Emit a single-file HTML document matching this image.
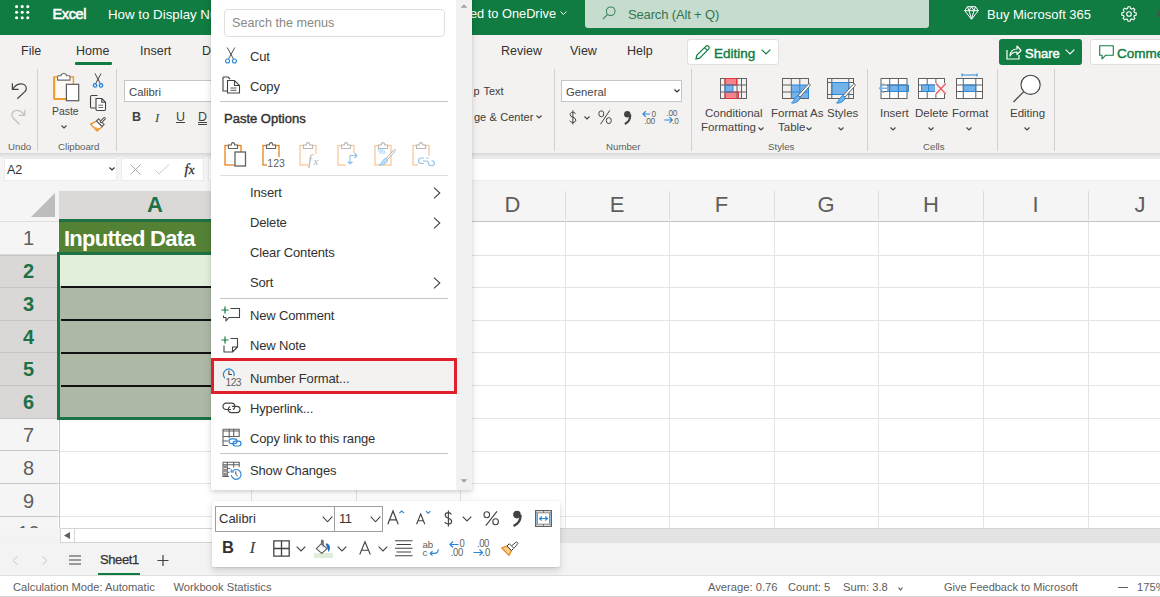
<!DOCTYPE html>
<html><head><meta charset="utf-8">
<style>
*{margin:0;padding:0;box-sizing:border-box}
html,body{width:1160px;height:597px;overflow:hidden;background:#f3f2f1;font-family:"Liberation Sans",sans-serif;position:relative}
.a{position:absolute}
.t{position:absolute;line-height:1;white-space:nowrap}
svg{position:absolute;overflow:visible}
#hdr{left:0;top:0;width:1160px;height:35px;background:#107c41}
#rib{left:0;top:35px;width:1160px;height:118px;background:#f3f2f1}
.sep{position:absolute;width:1px;background:#d2d0ce}
.lbl{position:absolute;line-height:1;white-space:nowrap;font-size:9.7px;color:#605e5c}
.rt{position:absolute;line-height:1;white-space:nowrap;font-size:11.5px;color:#444342}
.mi{position:absolute;line-height:1;white-space:nowrap;font-size:13px;color:#323130;left:250px;letter-spacing:-0.15px}
.msep{position:absolute;left:220px;width:228px;height:1px;background:#c8c6c4}
.colh{position:absolute;top:193.5px;font-size:22px;line-height:1;color:#605e5c;text-align:center;width:40px}
.rown{position:absolute;left:0;width:57px;text-align:center;font-size:20px;line-height:1;color:#605e5c}
.gl{position:absolute;background:#e4e4e4}
</style></head><body>

<!-- HEADER -->
<div id="hdr" class="a"></div>
<svg style="left:14.8px;top:5.3px" width="15" height="15" viewBox="0 0 15 15"><g fill="#fff"><circle cx="1.6" cy="1.6" r="1.55"/><circle cx="7.2" cy="1.6" r="1.55"/><circle cx="12.8" cy="1.6" r="1.55"/><circle cx="1.6" cy="7.2" r="1.55"/><circle cx="7.2" cy="7.2" r="1.55"/><circle cx="12.8" cy="7.2" r="1.55"/><circle cx="1.6" cy="12.8" r="1.55"/><circle cx="7.2" cy="12.8" r="1.55"/><circle cx="12.8" cy="12.8" r="1.55"/></g></svg>
<div class="t" style="left:52.5px;top:6.5px;font-size:14.5px;color:#fff;letter-spacing:-0.35px;-webkit-text-stroke:0.6px #fff">Excel</div>
<div class="t" style="left:108px;top:7.5px;font-size:13.3px;color:#fff">How to Display Number Format</div>
<div class="t" style="left:356px;width:200px;text-align:right;top:7.5px;font-size:12.8px;color:#fff">Saved to OneDrive</div>
<svg style="left:560px;top:11px" width="7" height="4" viewBox="0 0 7 4"><path d="M0.5 0.5 L3.5 3.5 L6.5 0.5" fill="none" stroke="#fff" stroke-width="1"/></svg>
<div class="a" style="left:585px;top:-3px;width:344px;height:31px;background:#c6dccf;border-radius:3px"></div>
<svg style="left:602px;top:6px" width="14" height="14" viewBox="0 0 14 14"><circle cx="8.7" cy="5.3" r="4.3" fill="none" stroke="#40805a" stroke-width="1.1"/><path d="M5.7 8.3 L0.8 13.2" stroke="#40805a" stroke-width="1.2"/></svg>
<div class="t" style="left:628px;top:7.5px;font-size:13px;color:#34764e;letter-spacing:-0.15px">Search (Alt + Q)</div>
<svg style="left:964px;top:6px" width="15" height="14" viewBox="0 0 15 14"><g fill="none" stroke="#fff" stroke-width="1"><path d="M3.5 0.7 H11.5 L14.3 4.7 L7.5 13.3 L0.7 4.7 Z"/><path d="M0.7 4.7 H14.3 M5 4.7 L7.5 13 L10 4.7 M3.5 0.7 L5 4.7 L7.5 0.7 L10 4.7 L11.5 0.7"/></g></svg>
<div class="t" style="left:987px;top:7.5px;font-size:13px;color:#fff">Buy Microsoft 365</div>
<svg style="left:1121px;top:5.5px" width="16" height="16" viewBox="0 0 16 16"><path fill="none" stroke="#fff" stroke-width="1.1" stroke-linejoin="round" d="M13.40 6.51 L15.22 6.90 L15.22 9.10 L13.40 9.49 L12.87 10.76 L13.88 12.33 L12.33 13.88 L10.76 12.87 L9.49 13.40 L9.10 15.22 L6.90 15.22 L6.51 13.40 L5.24 12.87 L3.67 13.88 L2.12 12.33 L3.13 10.76 L2.60 9.49 L0.78 9.10 L0.78 6.90 L2.60 6.51 L3.13 5.24 L2.12 3.67 L3.67 2.12 L5.24 3.13 L6.51 2.60 L6.90 0.78 L9.10 0.78 L9.49 2.60 L10.76 3.13 L12.33 2.12 L13.88 3.67 L12.87 5.24 Z"/><circle cx="8" cy="8" r="2.3" fill="none" stroke="#fff" stroke-width="1.1"/></svg>
<div class="a" style="left:1158px;top:10px;width:3px;height:7px;border-radius:1.5px;background:#3b5a44"></div>

<!-- RIBBON -->
<div id="rib" class="a"></div>
<div class="t" style="left:21px;top:45px;font-size:12.5px;color:#323130">File</div>
<div class="t" style="left:76px;top:45px;font-size:12.5px;color:#323130">Home</div>
<div class="a" style="left:75px;top:62px;width:37px;height:3px;background:#107c41;border-radius:1px"></div>
<div class="t" style="left:140px;top:45px;font-size:12.5px;color:#323130">Insert</div>
<div class="t" style="left:202px;top:45px;font-size:12.5px;color:#323130">Draw</div>
<div class="t" style="left:501px;top:45px;font-size:12.5px;color:#323130">Review</div>
<div class="t" style="left:570px;top:45px;font-size:12.5px;color:#323130">View</div>
<div class="t" style="left:627px;top:45px;font-size:12.5px;color:#323130">Help</div>


<!-- ribbon groups -->
<div class="sep" style="left:37px;top:69px;height:82px"></div>
<div class="sep" style="left:116px;top:69px;height:82px"></div>
<div class="sep" style="left:554px;top:69px;height:82px"></div>
<div class="sep" style="left:691px;top:69px;height:82px"></div>
<div class="sep" style="left:867px;top:69px;height:82px"></div>
<div class="sep" style="left:997px;top:69px;height:82px"></div>
<div class="sep" style="left:1054px;top:69px;height:82px"></div>
<div class="a" style="left:0;top:152.5px;width:1160px;height:6px;background:linear-gradient(#d8d8d8,#e4e4e4 40%,#f3f3f3)"></div>
<div class="lbl" style="left:8px;top:142px">Undo</div>
<div class="lbl" style="left:58px;top:142px">Clipboard</div>
<div class="lbl" style="left:606px;top:142px">Number</div>
<div class="lbl" style="left:768px;top:142px">Styles</div>
<div class="lbl" style="left:923px;top:142px">Cells</div>
<!-- undo/redo -->
<svg style="left:11px;top:82px" width="17" height="18" viewBox="0 0 17 18"><path d="M1.4 1.3 V7.3 H7.6" fill="none" stroke="#424242" stroke-width="1.2"/><path d="M1.8 7 C4 3.5 7 1.8 10.3 1.8 C13.3 1.8 15.3 4 15.3 6.4 C15.3 7.9 14.6 8.9 13.6 9.9 L6.3 16.8" fill="none" stroke="#424242" stroke-width="1.2"/></svg>
<svg style="left:11px;top:109px" width="17" height="17" viewBox="0 0 17 17"><path d="M13.8 0.8 V6.3 H7.6" fill="none" stroke="#c2c0be" stroke-width="1.2"/><path d="M13.4 6 C11.2 2.6 8.3 1.3 5.7 1.3 C2.7 1.3 0.9 3.6 0.9 6 C0.9 7.5 1.6 8.5 2.6 9.5 L8.5 15.3" fill="none" stroke="#c2c0be" stroke-width="1.2"/></svg>
<!-- paste -->
<svg style="left:53px;top:72px" width="27" height="30" viewBox="0 0 27 30">
<rect x="1.2" y="4.9" width="19.2" height="22" fill="#fdfaf5" stroke="#f29b2d" stroke-width="1.5"/>
<path d="M1.2 26.9 H13 M1.2 4.9 V26.9" stroke="#f29b2d" stroke-width="2" fill="none"/>
<path d="M4.6 8.1 V4.6 Q4.6 3.8 5.4 3.8 H8 C8.3 0.8 13.3 0.8 13.6 3.8 H16.2 Q17 3.8 17 4.6 V8.1 Z" fill="#fff" stroke="#6b6b6b" stroke-width="1.1"/>
<rect x="13.4" y="12.3" width="12.3" height="16.4" fill="#fff" stroke="#5a5a5a" stroke-width="1.2"/>
</svg>
<div class="rt" style="left:52px;top:106.5px;font-size:10.4px;color:#484644">Paste</div>
<svg style="left:61px;top:125px" width="6" height="4" viewBox="0 0 6 4"><path d="M0.5 0.5 L3 3 L5.5 0.5" fill="none" stroke="#424242" stroke-width="1.1"/></svg>
<!-- scissors -->
<svg style="left:92px;top:73px" width="12" height="15" viewBox="0 0 12 15"><path d="M3 0.5 L8.2 10.3 M9 0.5 L3.8 10.3" stroke="#424242" stroke-width="1"/><circle cx="3" cy="12.4" r="1.7" fill="none" stroke="#2b88d8" stroke-width="1.4"/><circle cx="9" cy="12.4" r="1.7" fill="none" stroke="#2b88d8" stroke-width="1.4"/></svg>
<!-- copy -->
<svg style="left:89px;top:94px" width="18" height="18" viewBox="0 0 18 18"><path d="M8.5 1.5 H2.8 Q1.5 1.5 1.5 2.8 V12.7 Q1.5 14 2.8 14 H6.5" fill="none" stroke="#424242" stroke-width="1.1"/><path d="M7 4.5 H12.8 L16.5 8.2 V15.3 Q16.5 16.5 15.3 16.5 H8.2 Q7 16.5 7 15.3 Z M12.8 4.5 V8.2 H16.5" fill="#fff" stroke="#424242" stroke-width="1.1"/><path d="M9.3 11.2 H14.2 M9.3 13.5 H14.2" stroke="#616161" stroke-width="0.9"/></svg>
<!-- format painter -->
<svg style="left:88px;top:116px" width="18" height="17" viewBox="0 0 18 17"><path d="M2.7 8.1 L8.7 5 L14.1 10.7 L9.1 15.1 Z" fill="#fff" stroke="#e8821d" stroke-width="1.2" stroke-linejoin="round"/><path d="M4.2 10.2 L12.3 12.4 L9.1 15.1 Z" fill="#f5a742"/><path d="M8.5 5 L10.6 2.9 L16.1 8.4 L14 10.5 Z" fill="#fff" stroke="#5a5a5a" stroke-width="1.1"/><path d="M13.2 5.7 L16.4 2.5" stroke="#5a5a5a" stroke-width="3" stroke-linecap="round"/><path d="M13.2 5.7 L16.4 2.5" stroke="#fff" stroke-width="1" stroke-linecap="round"/></svg>
<!-- font group (partially covered) -->
<div class="a" style="left:124px;top:80px;width:100px;height:22px;background:#fff;border:1px solid #c8c6c4"></div>
<div class="rt" style="left:129px;top:86.5px;font-size:11.3px;color:#484644">Calibri</div>
<div class="t" style="left:132px;top:111px;font-size:12.5px;font-weight:bold;color:#424242">B</div>
<div class="t" style="left:155px;top:111px;font-size:13px;font-style:italic;font-family:'Liberation Serif',serif;color:#424242">I</div>
<div class="t" style="left:176px;top:111px;font-size:12.5px;color:#424242;text-decoration:underline">U</div>
<div class="t" style="left:198px;top:111px;font-size:12.5px;color:#424242;text-decoration:underline double">D</div>
<!-- alignment partial -->
<div class="rt" style="left:473.5px;top:86px;font-size:11px;word-spacing:1px;color:#3b3a39">p Text</div>
<div class="rt" style="left:474px;top:112px;font-size:11px;word-spacing:0.3px;color:#3b3a39">ge &amp; Center</div>
<svg style="left:536px;top:115px" width="6" height="4" viewBox="0 0 6 4"><path d="M0.5 0.5 L3 3 L5.5 0.5" fill="none" stroke="#424242" stroke-width="1.1"/></svg>
<!-- number group -->
<div class="a" style="left:561px;top:80px;width:121px;height:22px;background:#fff;border:1px solid #c8c6c4"></div>
<div class="rt" style="left:566px;top:86.5px;font-size:11.3px;color:#484644">General</div>
<svg style="left:674px;top:89px" width="6" height="4" viewBox="0 0 6 4"><path d="M0.5 0.5 L3 3 L5.5 0.5" fill="none" stroke="#323130" stroke-width="1.2"/></svg>
<svg style="left:568.5px;top:110px" width="8" height="15" viewBox="0 0 8 15"><path d="M6.6 4 C6.1 2.9 5.1 2.3 3.8 2.3 C2.2 2.3 1.1 3.2 1.1 4.6 C1.1 7.8 6.8 6.8 6.8 10.1 C6.8 11.5 5.6 12.4 3.9 12.4 C2.4 12.4 1.3 11.8 0.7 10.7 M3.9 0.3 V14.5" fill="none" stroke="#424242" stroke-width="1"/></svg>
<svg style="left:584px;top:116px" width="6" height="4" viewBox="0 0 6 4"><path d="M0.5 0.5 L3 3 L5.5 0.5" fill="none" stroke="#424242" stroke-width="1.1"/></svg>
<svg style="left:597.5px;top:110px" width="15" height="15" viewBox="0 0 15 15"><ellipse cx="3.3" cy="3.8" rx="2.5" ry="3" fill="none" stroke="#424242" stroke-width="1"/><ellipse cx="10.8" cy="10.6" rx="2.5" ry="3" fill="none" stroke="#424242" stroke-width="1"/><path d="M11.8 0.3 L2.5 14.2" stroke="#424242" stroke-width="1"/></svg>
<svg style="left:623px;top:110px" width="9" height="15" viewBox="0 0 9 15"><circle cx="4.3" cy="4.2" r="3.2" fill="#424242"/><path d="M7.3 4.5 C7.5 9 5 12.5 1.8 14" fill="none" stroke="#424242" stroke-width="2"/></svg>
<svg style="left:642px;top:109px" width="16" height="16" viewBox="0 0 16 16"><path d="M1 5 H8 M3.8 2.2 L1 5 L3.8 7.8" fill="none" stroke="#2b88d8" stroke-width="1.2"/><text x="9.5" y="7" font-size="8.3" fill="#616161" font-family="Liberation Sans" transform="scale(1,1.1)">0</text><text x="2.3" y="13.6" font-size="8.3" fill="#616161" font-family="Liberation Sans" letter-spacing="-0.3" transform="scale(1,1.1)">.00</text></svg>
<svg style="left:664px;top:109px" width="16" height="16" viewBox="0 0 16 16"><text x="2.5" y="6.4" font-size="8.3" fill="#616161" font-family="Liberation Sans" letter-spacing="-0.3" transform="scale(1,1.1)">.00</text><path d="M0.3 11 H8.3 M5.5 8.2 L8.3 11 L5.5 13.8" fill="none" stroke="#2b88d8" stroke-width="1.2"/><text x="8" y="13.6" font-size="8.3" fill="#616161" font-family="Liberation Sans" transform="scale(1,1.1)">.0</text></svg>
<!-- editing button -->
<div class="a" style="left:687px;top:39px;width:92px;height:26px;background:#fff;border:1px solid #e1dfdd;border-radius:3px"></div>
<svg style="left:695px;top:45px" width="15" height="15" viewBox="0 0 15 15"><path d="M1 14 L1.8 10.3 L10.8 1.3 C11.6 0.5 12.8 0.5 13.6 1.3 C14.4 2.1 14.4 3.3 13.6 4.1 L4.6 13.1 Z M9.5 2.6 L12.3 5.4" fill="none" stroke="#107c41" stroke-width="1.2"/></svg>
<div class="t" style="left:714px;top:46.8px;font-size:13.5px;color:#107c41;-webkit-text-stroke:0.4px #107c41">Editing</div>
<svg style="left:761px;top:49px" width="10" height="6" viewBox="0 0 10 6"><path d="M0.7 0.7 L5 5 L9.3 0.7" fill="none" stroke="#107c41" stroke-width="1.2"/></svg>
<!-- share / comments -->
<div class="a" style="left:999px;top:39px;width:83px;height:26px;background:#107c41;border-radius:3px"></div>
<svg style="left:1006px;top:44px" width="16" height="16" viewBox="0 0 16 16"><path d="M1 6 V15 H13 V11" fill="none" stroke="#fff" stroke-width="1.2"/><path d="M4 12 C4 7 7.5 5 11 5 V2 L15 6.5 L11 10.5 V8 C8 8 5.5 9 4 12 Z" fill="none" stroke="#fff" stroke-width="1.2" stroke-linejoin="round"/></svg>
<div class="t" style="left:1025px;top:46.8px;font-size:13px;color:#fff;-webkit-text-stroke:0.45px #fff">Share</div>
<svg style="left:1065px;top:49px" width="10" height="6" viewBox="0 0 10 6"><path d="M0.7 0.7 L5 5 L9.3 0.7" fill="none" stroke="#fff" stroke-width="1.2"/></svg>
<div class="a" style="left:1090px;top:39px;width:90px;height:26px;background:#fff;border:1px solid #e1dfdd;border-radius:3px"></div>
<svg style="left:1099px;top:45px" width="15" height="15" viewBox="0 0 15 15"><path d="M0.7 0.7 H14.3 V10.3 H6.5 L3 13.8 V10.3 H0.7 Z" fill="none" stroke="#107c41" stroke-width="1.1" stroke-linejoin="round"/></svg>
<div class="t" style="left:1117px;top:46.8px;font-size:13.5px;color:#107c41;-webkit-text-stroke:0.4px #107c41">Comments</div>


<!-- styles group -->
<svg style="left:720px;top:78px" width="27" height="21" viewBox="0 0 27 21">
<rect x="5" y="0.5" width="11.5" height="6.5" fill="#f4848c"/><rect x="5" y="7" width="8" height="7" fill="#73b3ea"/><rect x="5" y="14" width="13.5" height="6.5" fill="#f4848c"/>
<g fill="none" stroke="#616161" stroke-width="1"><rect x="0.5" y="0.5" width="26" height="20"/><path d="M0.5 7 H26.5 M0.5 14 H26.5 M5 0.5 V20.5 M21.5 0.5 V20.5 M17 0.5 V20.5"/></g>
<g fill="none" stroke="#e0343f" stroke-width="1"><path d="M5 0.5 H16.5 V7 H5 Z M5 14 H18.5 V20.5 H5 Z"/></g>
<path d="M5 7 H13 V14 H5 Z" fill="none" stroke="#2b88d8" stroke-width="1"/>
</svg>
<svg style="left:782px;top:78px" width="29" height="26" viewBox="0 0 29 26">
<rect x="9.3" y="7" width="17.2" height="13.5" fill="#73b3ea"/>
<g fill="none" stroke="#616161" stroke-width="1"><rect x="0.5" y="0.5" width="26" height="20"/><path d="M0.5 7 H9.3 M0.5 14 H9.3 M9.3 0.5 V7 M17.8 0.5 V7 M9.3 7 V20.5"/></g>
<path d="M9.3 7 H26.5 V20.5 M9.3 14 H26.5 M17.8 7 V20.5" fill="none" stroke="#2b88d8" stroke-width="1"/>
<path d="M27.8 6 C28.6 6.8 28 7.8 27 9 L18 19 L16.3 17.3 L25.5 7 C26.5 6 27.2 5.4 27.8 6 Z" fill="#fff" stroke="#616161" stroke-width="1"/>
<path d="M16 17.5 L18 19.5 C17.5 23.5 13 25.5 9.5 25 C12 23.5 12 19.5 16 17.5 Z" fill="#73b3ea" stroke="#2b88d8" stroke-width="1"/>
</svg>
<svg style="left:827px;top:78px" width="29" height="26" viewBox="0 0 29 26">
<rect x="4.8" y="4.5" width="17" height="12" fill="#73b3ea"/>
<g fill="none" stroke="#616161" stroke-width="1"><rect x="0.5" y="0.5" width="26" height="20"/><path d="M0.5 4.5 H26.5 M0.5 16.5 H26.5 M4.8 0.5 V20.5 M21.8 0.5 V20.5"/></g>
<path d="M4.8 4.5 H21.8 V16.5 H4.8 Z" fill="none" stroke="#2b88d8" stroke-width="1"/>
<path d="M27.8 6 C28.6 6.8 28 7.8 27 9 L18 19 L16.3 17.3 L25.5 7 C26.5 6 27.2 5.4 27.8 6 Z" fill="#fff" stroke="#616161" stroke-width="1"/>
<path d="M16 17.5 L18 19.5 C17.5 23.5 13 25.5 9.5 25 C12 23.5 12 19.5 16 17.5 Z" fill="#73b3ea" stroke="#2b88d8" stroke-width="1"/>
</svg>
<div class="rt" style="left:705px;top:108px">Conditional</div>
<div class="rt" style="left:701px;top:122px">Formatting</div>
<div class="rt" style="left:771px;top:108px">Format As</div>
<div class="rt" style="left:778px;top:122px">Table</div>
<div class="rt" style="left:827px;top:108px">Styles</div>
<!-- cells group -->
<svg style="left:879px;top:78px" width="30" height="21" viewBox="0 0 30 21">
<rect x="2" y="0.5" width="26" height="20" fill="#fff"/>
<rect x="8" y="7" width="21.5" height="6.5" fill="#73b3ea"/>
<g fill="none" stroke="#616161" stroke-width="1"><rect x="2" y="0.5" width="26" height="20"/><path d="M2 7 H28 M2 13.5 H28 M10.7 0.5 V20.5 M19.4 0.5 V20.5"/></g>
<path d="M8 7 H29.5 V13.5 H8 M19.4 7 V13.5" fill="none" stroke="#2b88d8" stroke-width="1"/>
<path d="M10 10.2 H1 M5 5.5 L0.7 10.2 L5 15" fill="none" stroke="#73b3ea" stroke-width="1.6"/>
</svg>
<svg style="left:918px;top:78px" width="29" height="21" viewBox="0 0 29 21">
<rect x="0.5" y="0.5" width="26" height="20" fill="#fff"/>
<g fill="none" stroke="#616161" stroke-width="1"><rect x="0.5" y="0.5" width="26" height="20"/><path d="M0.5 7 H26.5 M0.5 13.5 H26.5 M9.2 0.5 V20.5 M17.9 0.5 V20.5"/></g>
<path d="M3.5 7 H17.5 L19.5 10.2 L17.5 13.5 H3.5 Z" fill="#73b3ea" stroke="#2b88d8" stroke-width="1"/><path d="M10.5 7 V13.5" stroke="#2b88d8"/>
<rect x="17" y="5" width="11" height="11" fill="#f3f2f1"/>
<path d="M18 5.5 L27.8 16 M27.8 5.5 L18 16" stroke="#e8525b" stroke-width="1.1"/>
</svg>
<svg style="left:956px;top:73px" width="27" height="26" viewBox="0 0 27 26">
<path d="M6 2 H21 M6 0.5 V3.5 M21 0.5 V3.5" fill="none" stroke="#2b88d8" stroke-width="1.1"/>
<rect x="0.5" y="5.5" width="26" height="20" fill="#fff"/>
<rect x="7.3" y="12" width="12.5" height="6.5" fill="#73b3ea"/>
<g fill="none" stroke="#616161" stroke-width="1"><rect x="0.5" y="5.5" width="26" height="20"/><path d="M0.5 12 H26.5 M0.5 18.5 H26.5 M7.3 5.5 V25.5 M19.8 5.5 V25.5"/></g>
<rect x="7.3" y="12" width="12.5" height="6.5" fill="none" stroke="#2b88d8" stroke-width="1"/>
</svg>
<div class="rt" style="left:880px;top:108px">Insert</div>
<div class="rt" style="left:915px;top:108px">Delete</div>
<div class="rt" style="left:952px;top:108px">Format</div>
<!-- editing group -->
<svg style="left:1012px;top:74px" width="30" height="30" viewBox="0 0 30 30"><circle cx="18.6" cy="10.8" r="9.6" fill="#fff" stroke="#424242" stroke-width="1.1"/><path d="M11.8 17.6 L1.5 28" stroke="#424242" stroke-width="1.2"/></svg>
<div class="rt" style="left:1010px;top:108px">Editing</div>
<svg style="left:758px;top:127px" width="6" height="4" viewBox="0 0 6 4"><path d="M0.5 0.5 L3 3 L5.5 0.5" fill="none" stroke="#424242" stroke-width="1.1"/></svg>
<svg style="left:806px;top:127px" width="6" height="4" viewBox="0 0 6 4"><path d="M0.5 0.5 L3 3 L5.5 0.5" fill="none" stroke="#424242" stroke-width="1.1"/></svg>
<svg style="left:838px;top:127px" width="6" height="4" viewBox="0 0 6 4"><path d="M0.5 0.5 L3 3 L5.5 0.5" fill="none" stroke="#424242" stroke-width="1.1"/></svg>
<svg style="left:890px;top:127px" width="6" height="4" viewBox="0 0 6 4"><path d="M0.5 0.5 L3 3 L5.5 0.5" fill="none" stroke="#424242" stroke-width="1.1"/></svg>
<svg style="left:928px;top:127px" width="6" height="4" viewBox="0 0 6 4"><path d="M0.5 0.5 L3 3 L5.5 0.5" fill="none" stroke="#424242" stroke-width="1.1"/></svg>
<svg style="left:966px;top:127px" width="6" height="4" viewBox="0 0 6 4"><path d="M0.5 0.5 L3 3 L5.5 0.5" fill="none" stroke="#424242" stroke-width="1.1"/></svg>
<svg style="left:1024px;top:127px" width="6" height="4" viewBox="0 0 6 4"><path d="M0.5 0.5 L3 3 L5.5 0.5" fill="none" stroke="#424242" stroke-width="1.1"/></svg>


<!-- formula bar -->
<div class="a" style="left:0;top:158px;width:1160px;height:33px;background:#f5f5f5"></div>
<div class="a" style="left:4px;top:158px;width:113px;height:22.5px;background:#fff;border:1px solid #edebe9"></div>
<div class="t" style="left:7px;top:164px;font-size:12.5px;color:#323130">A2</div>
<svg style="left:109px;top:167px" width="6" height="4" viewBox="0 0 6 4"><path d="M0.5 0.5 L3 3 L5.5 0.5" fill="none" stroke="#323130" stroke-width="1.2"/></svg>
<div class="a" style="left:121px;top:158px;width:82.5px;height:22.5px;background:#fff;border:1px solid #edebe9"></div>
<svg style="left:130px;top:164px" width="11" height="11" viewBox="0 0 11 11"><path d="M0.5 0.5 L10.5 10.5 M10.5 0.5 L0.5 10.5" stroke="#a19f9d" stroke-width="0.9"/></svg>
<svg style="left:154px;top:164px" width="16" height="11" viewBox="0 0 16 11"><path d="M0.5 5.5 L5 10 L15 0.5" fill="none" stroke="#c8c6c4" stroke-width="0.9"/></svg>
<div class="t" style="left:184.5px;top:161.5px;font-size:14.5px;font-style:italic;font-family:'Liberation Serif',serif;color:#323130;-webkit-text-stroke:0.3px #323130;letter-spacing:0.3px">f<span style="font-size:13px">x</span></div>
<div class="a" style="left:208px;top:158px;width:960px;height:22.5px;background:#fff;border:1px solid #edebe9"></div>
<!-- column headers -->
<div class="a" style="left:0;top:191px;width:1160px;height:31px;background:#f5f5f5"></div>
<div class="a" style="left:59px;top:191px;width:192px;height:29px;background:#dad9d8"></div>
<div class="a" style="left:0;top:221px;width:59px;height:1px;background:#e1dfdd"></div><div class="a" style="left:59px;top:221px;width:1101px;height:1.5px;background:#c4c4c4"></div>
<div class="a" style="left:59px;top:219px;width:192px;height:3px;background:#1e7145"></div>
<svg style="left:31px;top:193px" width="25" height="25" viewBox="0 0 25 25"><path d="M24 0 V24 H0 Z" fill="#bdbdbd"/></svg>
<div class="gl" style="left:251px;top:191px;width:1px;height:29px;background:#dcdcdc"></div>
<div class="gl" style="left:356px;top:191px;width:1px;height:29px;background:#dcdcdc"></div>
<div class="gl" style="left:460px;top:191px;width:1px;height:29px;background:#dcdcdc"></div>
<div class="gl" style="left:565px;top:191px;width:1px;height:29px;background:#dcdcdc"></div>
<div class="gl" style="left:669px;top:191px;width:1px;height:29px;background:#dcdcdc"></div>
<div class="gl" style="left:774px;top:191px;width:1px;height:29px;background:#dcdcdc"></div>
<div class="gl" style="left:878px;top:191px;width:1px;height:29px;background:#dcdcdc"></div>
<div class="gl" style="left:983px;top:191px;width:1px;height:29px;background:#dcdcdc"></div>
<div class="gl" style="left:1088px;top:191px;width:1px;height:29px;background:#dcdcdc"></div>
<div class="colh" style="left:135px;color:#1e7145;font-weight:bold">A</div>
<div class="colh" style="left:283px">B</div>
<div class="colh" style="left:388px">C</div>
<div class="colh" style="left:492.5px">D</div>
<div class="colh" style="left:597px">E</div>
<div class="colh" style="left:701.5px">F</div>
<div class="colh" style="left:806px">G</div>
<div class="colh" style="left:911px">H</div>
<div class="colh" style="left:1015.5px">I</div>
<div class="colh" style="left:1120px">J</div>
<div class="a" style="left:0;top:222px;width:59px;height:306px;background:#f5f5f5"></div>
<div class="a" style="left:58px;top:222px;width:1102px;height:306px;background:#fff"></div>
<div class="a" style="left:0;top:254px;width:58px;height:164px;background:#d9d8d7"></div>
<div class="gl" style="left:0;top:254.5px;width:58px;height:1px;background:#c8c6c4"></div>
<div class="gl" style="left:58px;top:255px;width:1102px;height:1px"></div>
<div class="gl" style="left:0;top:287px;width:58px;height:1px;background:#c8c6c4"></div>
<div class="gl" style="left:58px;top:287px;width:1102px;height:1px"></div>
<div class="gl" style="left:0;top:320px;width:58px;height:1px;background:#c8c6c4"></div>
<div class="gl" style="left:58px;top:320px;width:1102px;height:1px"></div>
<div class="gl" style="left:0;top:352px;width:58px;height:1px;background:#c8c6c4"></div>
<div class="gl" style="left:58px;top:352px;width:1102px;height:1px"></div>
<div class="gl" style="left:0;top:385px;width:58px;height:1px;background:#c8c6c4"></div>
<div class="gl" style="left:58px;top:385px;width:1102px;height:1px"></div>
<div class="gl" style="left:0;top:418px;width:58px;height:1px;background:#c8c6c4"></div>
<div class="gl" style="left:58px;top:418px;width:1102px;height:1px"></div>
<div class="gl" style="left:0;top:450px;width:58px;height:1px;background:#c8c6c4"></div>
<div class="gl" style="left:58px;top:450.5px;width:1102px;height:1px"></div>
<div class="gl" style="left:0;top:483px;width:58px;height:1px;background:#c8c6c4"></div>
<div class="gl" style="left:58px;top:483px;width:1102px;height:1px"></div>
<div class="gl" style="left:0;top:516px;width:58px;height:1px;background:#c8c6c4"></div>
<div class="gl" style="left:58px;top:516px;width:1102px;height:1px"></div>
<div class="gl" style="left:251px;top:222px;width:1px;height:306px"></div>
<div class="gl" style="left:356px;top:222px;width:1px;height:306px"></div>
<div class="gl" style="left:460px;top:222px;width:1px;height:306px"></div>
<div class="gl" style="left:565px;top:222px;width:1px;height:306px"></div>
<div class="gl" style="left:669px;top:222px;width:1px;height:306px"></div>
<div class="gl" style="left:774px;top:222px;width:1px;height:306px"></div>
<div class="gl" style="left:878px;top:222px;width:1px;height:306px"></div>
<div class="gl" style="left:983px;top:222px;width:1px;height:306px"></div>
<div class="gl" style="left:1088px;top:222px;width:1px;height:306px"></div>
<div class="a" style="left:59px;top:222px;width:1px;height:306px;background:#c8c6c4"></div>
<div class="rown" style="top:227.8px">1</div>
<div class="rown" style="top:261.2px;color:#1e7145;font-weight:bold">2</div>
<div class="rown" style="top:293.9px;color:#1e7145;font-weight:bold">3</div>
<div class="rown" style="top:326.6px;color:#1e7145;font-weight:bold">4</div>
<div class="rown" style="top:359.4px;color:#1e7145;font-weight:bold">5</div>
<div class="rown" style="top:392.1px;color:#1e7145;font-weight:bold">6</div>
<div class="rown" style="top:425.0px">7</div>
<div class="rown" style="top:457.9px">8</div>
<div class="rown" style="top:490.6px">9</div>
<div class="rown" style="top:523.4px">10</div>
<div class="a" style="left:59px;top:222px;width:192px;height:32px;background:#548235"></div>
<div class="t" style="left:64px;top:228px;font-size:22px;font-weight:bold;color:#fff;letter-spacing:-0.75px">Inputted Data</div>
<div class="a" style="left:60px;top:255px;width:191px;height:31px;background:#e2efda"></div>
<div class="a" style="left:60px;top:286px;width:191px;height:131px;background:#adb9a6"></div>
<div class="a" style="left:61px;top:286px;width:190px;height:2px;background:#111"></div>
<div class="a" style="left:61px;top:319px;width:190px;height:2px;background:#111"></div>
<div class="a" style="left:61px;top:352px;width:190px;height:2px;background:#111"></div>
<div class="a" style="left:61px;top:385px;width:190px;height:2px;background:#111"></div>
<div class="a" style="left:57px;top:252px;width:196px;height:168px;border:3px solid #1e7145"></div>
<div class="a" style="left:0;top:528px;width:1160px;height:14px;background:#f3f3f3"></div>
<div class="a" style="left:60px;top:528px;width:1100px;height:15px;background:#fff;border:1px solid #d4d4d4"></div>
<div class="a" style="left:300px;top:529px;width:860px;height:14px;background:#e3e3e3"></div>
<div class="a" style="left:74px;top:528px;width:1px;height:15px;background:#d4d4d4"></div>
<svg style="left:64px;top:532px" width="7" height="7" viewBox="0 0 7 7"><path d="M6 0 V7 L0 3.5 Z" fill="#605e5c"/></svg>
<div class="a" style="left:0;top:543px;width:1160px;height:33px;background:#f3f3f3"></div>
<svg style="left:12px;top:556px" width="6" height="9" viewBox="0 0 6 9"><path d="M5.5 0.5 L1 4.5 L5.5 8.5" fill="none" stroke="#c8c6c4" stroke-width="1"/></svg>
<svg style="left:42px;top:556px" width="6" height="9" viewBox="0 0 6 9"><path d="M0.5 0.5 L5 4.5 L0.5 8.5" fill="none" stroke="#c8c6c4" stroke-width="1"/></svg>
<svg style="left:69px;top:555px" width="12" height="10" viewBox="0 0 12 10"><path d="M0 1 H12 M0 5 H12 M0 9 H12" stroke="#424242" stroke-width="1.2"/></svg>
<div class="t" style="left:100px;top:553px;font-size:13px;color:#323130;letter-spacing:-0.4px;-webkit-text-stroke:0.25px #323130">Sheet1</div>
<div class="a" style="left:98px;top:572.5px;width:42px;height:2.7px;background:#107c41"></div>
<svg style="left:157px;top:555px" width="12" height="11" viewBox="0 0 12 11"><path d="M6 0 V11 M0.5 5.5 H11.5" stroke="#424242" stroke-width="1.2"/></svg>
<div class="a" style="left:0;top:575px;width:1160px;height:22px;background:#fff;border-top:1px solid #e1dfdd;border-bottom:1.5px solid #d6d6d6"></div>
<div class="t" style="left:13px;top:582px;font-size:11.2px;color:#605e5c">Calculation Mode: Automatic</div>
<div class="t" style="left:173.5px;top:582px;font-size:11.2px;color:#605e5c">Workbook Statistics</div>
<div class="t" style="left:708px;top:582px;font-size:11.2px;color:#605e5c">Average: 0.76</div>
<div class="t" style="left:788px;top:582px;font-size:11.2px;color:#605e5c">Count: 5</div>
<div class="t" style="left:843px;top:582px;font-size:11.2px;color:#605e5c">Sum: 3.8</div>
<div class="t" style="left:944px;top:582px;font-size:11px;color:#605e5c">Give Feedback to Microsoft</div>
<div class="t" style="left:1137px;top:582px;font-size:11.2px;color:#605e5c">175%</div>
<svg style="left:898px;top:587px" width="5" height="4" viewBox="0 0 5 4"><path d="M0.5 0.5 L2.5 3 L4.5 0.5" fill="none" stroke="#605e5c" stroke-width="1.2"/></svg>
<div class="a" style="left:1118px;top:586.5px;width:10px;height:1.6px;background:#605e5c"></div>


<!-- CONTEXT MENU -->
<div class="a" style="left:211px;top:-10px;width:261px;height:500px;background:#fff;box-shadow:0 1.6px 3.6px rgba(0,0,0,.13),0 0.3px 0.9px rgba(0,0,0,.11),0 4px 10px rgba(0,0,0,.08)"></div>
<div class="a" style="left:456px;top:0;width:16px;height:490px;background:#f1f1f1"></div>
<svg style="left:460px;top:4px" width="8" height="4" viewBox="0 0 8 4"><path d="M0.5 3.8 L4 0.3 L7.5 3.8 Z" fill="#a3a3a3"/></svg>
<svg style="left:460px;top:479px" width="8" height="4" viewBox="0 0 8 4"><path d="M0.5 0.2 L4 3.7 L7.5 0.2 Z" fill="#a3a3a3"/></svg>
<div class="a" style="left:224px;top:9px;width:221px;height:28px;border:1px solid #e1dfdd;border-radius:4px;background:#fff"></div>
<div class="t" style="left:232px;top:16.5px;font-size:12.6px;color:#8a8886">Search the menus</div>
<div class="msep" style="top:101px"></div>
<div class="msep" style="top:175px;background:#e1dfdd"></div>
<div class="msep" style="top:298px"></div>
<div class="msep" style="top:453px"></div>
<div class="a" style="left:211px;top:358px;width:246px;height:36px;border:3px solid #e0202b;background:#f3f2f1"></div>
<div class="mi" style="top:49.8px">Cut</div>
<div class="mi" style="top:79.6px">Copy</div>
<div class="t" style="left:224px;top:111.8px;font-size:13px;color:#323130;-webkit-text-stroke:0.4px #323130">Paste Options</div>
<div class="mi" style="top:186.4px">Insert</div>
<div class="mi" style="top:216.1px">Delete</div>
<div class="mi" style="top:246.3px">Clear Contents</div>
<div class="mi" style="top:276px">Sort</div>
<div class="mi" style="top:309.2px">New Comment</div>
<div class="mi" style="top:338.9px">New Note</div>
<div class="mi" style="top:371.7px">Number Format...</div>
<div class="mi" style="top:402px">Hyperlink...</div>
<div class="mi" style="top:432.2px">Copy link to this range</div>
<div class="mi" style="top:463.9px">Show Changes</div>
<svg style="left:433px;top:187px" width="8" height="12" viewBox="0 0 8 12"><path d="M1 0.7 L6.8 6 L1 11.3" fill="none" stroke="#424242" stroke-width="1.1"/></svg>
<svg style="left:433px;top:216.5px" width="8" height="12" viewBox="0 0 8 12"><path d="M1 0.7 L6.8 6 L1 11.3" fill="none" stroke="#424242" stroke-width="1.1"/></svg>
<svg style="left:433px;top:276.5px" width="8" height="12" viewBox="0 0 8 12"><path d="M1 0.7 L6.8 6 L1 11.3" fill="none" stroke="#424242" stroke-width="1.1"/></svg>

<!-- menu icons -->
<svg style="left:225px;top:47px" width="12" height="17" viewBox="0 0 12 17"><path d="M2.2 0.5 L8.5 12 M9.8 0.5 L3.5 12" stroke="#424242" stroke-width="0.9"/><circle cx="2.6" cy="14" r="2" fill="none" stroke="#2b88d8" stroke-width="1.1"/><circle cx="9.4" cy="14" r="2" fill="none" stroke="#2b88d8" stroke-width="1.1"/></svg>
<svg style="left:222px;top:76px" width="19" height="18" viewBox="0 0 19 18"><path d="M1 1 H6 L8 3 M1 1 V15 H5" fill="none" stroke="#424242" stroke-width="1.1"/><path d="M5.5 4.5 H12.5 L17.5 9.5 V17 H5.5 Z M12.5 4.5 V9.5 H17.5" fill="#fff" stroke="#424242" stroke-width="1.1"/><path d="M8.5 12 H14.5 M8.5 14.3 H14.5" stroke="#424242" stroke-width="0.9"/></svg>
<svg style="left:224px;top:141px" width="24" height="27" viewBox="0 0 24 27"><rect x="1" y="4.5" width="16" height="19.5" fill="#fff" stroke="#e8821d" stroke-width="1.3"/><path d="M4.5 7.5 V4 H7.3 C7.3 0.8 10.7 0.8 10.7 4 H13.5 V7.5 Z" fill="#fff" stroke="#616161" stroke-width="1.1"/><rect x="11" y="11" width="10.5" height="14" fill="#fff" stroke="#616161" stroke-width="1.3"/></svg>
<svg style="left:262px;top:141px" width="24" height="27" viewBox="0 0 24 27"><rect x="1" y="4.5" width="16" height="19.5" fill="#fff" stroke="#e8821d" stroke-width="1.3"/><path d="M4.5 7.5 V4 H7.3 C7.3 0.8 10.7 0.8 10.7 4 H13.5 V7.5 Z" fill="#fff" stroke="#616161" stroke-width="1.1"/><rect x="5" y="16" width="18" height="10" fill="#fff"/><text x="5.3" y="25.5" font-size="10.5" fill="#616161" font-family="Liberation Sans">123</text></svg>
<svg style="left:299px;top:141px" width="24" height="27" viewBox="0 0 24 27"><rect x="1" y="4.5" width="16" height="19.5" fill="#fff" stroke="#f8c898" stroke-width="1.3"/><path d="M4.5 7.5 V4 H7.3 C7.3 0.8 10.7 0.8 10.7 4 H13.5 V7.5 Z" fill="#fff" stroke="#b8b8b8" stroke-width="1.1"/><rect x="9" y="13" width="14" height="13" fill="#fff"/><text x="9" y="24" font-size="14" fill="#b0b0b0" font-style="italic" font-family="Liberation Serif">f</text><text x="14.5" y="24" font-size="11" fill="#b0b0b0" font-style="italic" font-family="Liberation Serif">x</text></svg>
<svg style="left:336.5px;top:141px" width="24" height="27" viewBox="0 0 24 27"><rect x="1" y="4.5" width="16" height="19.5" fill="#fff" stroke="#f8c898" stroke-width="1.3"/><path d="M4.5 7.5 V4 H7.3 C7.3 0.8 10.7 0.8 10.7 4 H13.5 V7.5 Z" fill="#fff" stroke="#b8b8b8" stroke-width="1.1"/><rect x="9" y="12" width="13" height="13" fill="#fff"/><path d="M13 14.5 H20 M17.5 12 L20 14.5 L17.5 17 M13 14.5 V23 M10.5 20.5 L13 23 L15.5 20.5" fill="none" stroke="#8ec2ec" stroke-width="1.1"/></svg>
<svg style="left:374px;top:141px" width="24" height="27" viewBox="0 0 24 27"><rect x="1" y="4.5" width="16" height="19.5" fill="#fff" stroke="#f8c898" stroke-width="1.3"/><path d="M4.5 7.5 V4 H7.3 C7.3 0.8 10.7 0.8 10.7 4 H13.5 V7.5 Z" fill="#fff" stroke="#b8b8b8" stroke-width="1.1"/><text x="3.5" y="13" font-size="8.5" fill="#8ec2ec" font-family="Liberation Sans">%</text><path d="M21 8.5 C21.8 9.3 21.3 10 20.3 11 L13.5 18.5 L12.2 17.2 L19 9.8 C20 8.8 20.5 8 21 8.5 Z" fill="#fff" stroke="#a8a8a8" stroke-width="0.9"/><path d="M12 17 L13.8 18.8 C13 22.5 9 24.5 5 24 C8 22.5 8 18.5 12 17 Z" fill="#bfdcf5" stroke="#8ec2ec" stroke-width="0.9"/></svg>
<svg style="left:411.5px;top:141px" width="24" height="27" viewBox="0 0 24 27"><rect x="1" y="4.5" width="16" height="19.5" fill="#fff" stroke="#f8c898" stroke-width="1.3"/><path d="M4.5 7.5 V4 H7.3 C7.3 0.8 10.7 0.8 10.7 4 H13.5 V7.5 Z" fill="#fff" stroke="#b8b8b8" stroke-width="1.1"/><rect x="6" y="15" width="17" height="11" fill="#fff"/><path d="M12 17 H9.5 C7.5 17 6.5 18.3 6.5 19.8 C6.5 21.3 7.5 22.5 9.5 22.5 H12 M14 17 H16.5" fill="none" stroke="#8ec2ec" stroke-width="1.1"/><path d="M11 20 H14 C16 20 16.5 21.2 16.5 22.3 C16.5 23.5 17.5 24.8 19.5 24.8 C21.5 24.8 22.5 23.6 22.5 22.3 C22.5 21 21.5 19.8 19.5 19.8" fill="none" stroke="#8ec2ec" stroke-width="1.1"/></svg>

<svg style="left:221px;top:306px" width="20" height="18" viewBox="0 0 20 18"><path d="M4 0.5 V7.5 M0.5 4 H7.5" stroke="#107c41" stroke-width="1.2"/><path d="M9.5 2.5 H18.5 V11.5 H8 L5 15 V11.5 H2.5 V9.5" fill="none" stroke="#424242" stroke-width="1.1" stroke-linejoin="round"/></svg>
<svg style="left:221px;top:336px" width="19" height="17" viewBox="0 0 19 17"><path d="M4 0.5 V7.5 M0.5 4 H7.5" stroke="#107c41" stroke-width="1.2"/><path d="M9.5 2.5 H16.5 V11 L11.5 16 H3 V9.5 M16.5 11 H11.5 V16" fill="none" stroke="#424242" stroke-width="1.1" stroke-linejoin="round"/></svg>
<svg style="left:218px;top:366px" width="24" height="22" viewBox="0 0 24 22"><path d="M7.2 12.3 A5.3 5.3 0 1 1 15.8 10.2" fill="none" stroke="#2b88d8" stroke-width="1.2"/><path d="M10.9 4.5 V8.5 H14" fill="none" stroke="#424242" stroke-width="1.1"/><rect x="7" y="11.5" width="16" height="9" fill="#f3f2f1"/><text x="7.6" y="20" font-size="10.3" fill="#616161" font-family="Liberation Sans" letter-spacing="-0.6">123</text></svg>
<svg style="left:222px;top:402px" width="19" height="12" viewBox="0 0 19 12"><rect x="1" y="1.2" width="11.8" height="6.3" rx="3.1" fill="none" stroke="#424242" stroke-width="1.2"/><rect x="6.2" y="4.4" width="11.8" height="6.3" rx="3.1" fill="none" stroke="#424242" stroke-width="1.2"/><path d="M9 7.5 H11" stroke="#fff" stroke-width="1.6"/><path d="M8 4.4 H10" stroke="#fff" stroke-width="1.6"/></svg>
<svg style="left:222px;top:428px" width="20" height="19" viewBox="0 0 20 19"><path d="M1 1.2 H17.2 V9 M1 1.2 V17.5 H6.5 M1 3 H17.2 M1 8.5 H17.2 M1 13 H7.5 M7.2 1.2 V12 M11.7 1.2 V8.5" fill="none" stroke="#616161" stroke-width="1.1"/><rect x="6" y="10" width="14" height="9" fill="#fff"/><rect x="7" y="10.8" width="8" height="4.8" rx="2.4" fill="none" stroke="#2b88d8" stroke-width="1.2"/><rect x="11" y="13.2" width="8" height="4.8" rx="2.4" fill="none" stroke="#2b88d8" stroke-width="1.2"/></svg>
<svg style="left:222px;top:461px" width="21" height="19" viewBox="0 0 21 19"><path d="M1 1.2 H17.2 V6 M1 1.2 V15.5 H7 M1 3.8 H17.2 M1 7.5 H8 M1 11.3 H7.5 M5.3 1.2 V15.5 M11.7 1.2 V6.5" fill="none" stroke="#616161" stroke-width="1.1"/><path d="M1.5 4.3 H4.8 V15 H1.5 Z" fill="#8a8a8a"/><path d="M1.5 7.5 H4.8 M1.5 11.3 H4.8" stroke="#fff" stroke-width="0.8"/><rect x="8" y="7" width="13" height="12" fill="#fff"/><path d="M10.2 10.5 A4.9 4.9 0 1 1 9.3 14" fill="none" stroke="#2b88d8" stroke-width="1.2"/><path d="M9.2 8.3 V11 H12" fill="none" stroke="#2b88d8" stroke-width="1.1"/><path d="M13.8 10.3 V13.3 L15.8 15.2" fill="none" stroke="#424242" stroke-width="1"/></svg>


<!-- MINI TOOLBAR -->
<div class="a" style="left:211.5px;top:501px;width:348.5px;height:65.5px;background:#fff;border-radius:2px;box-shadow:0 3.2px 7.2px rgba(0,0,0,.13),0 0.6px 1.8px rgba(0,0,0,.11)"></div>
<div class="a" style="left:215px;top:505.5px;width:168px;height:26px;border:1px solid #a19f9d;background:#fff"></div>
<div class="a" style="left:334px;top:505.5px;width:1px;height:26px;background:#a19f9d"></div>
<div class="t" style="left:219px;top:511.5px;font-size:13px;color:#323130">Calibri</div>
<div class="t" style="left:339px;top:511.5px;font-size:13px;color:#323130;letter-spacing:-0.5px">11</div>
<svg style="left:322px;top:516px" width="11" height="7" viewBox="0 0 11 7"><path d="M0.7 0.7 L5.5 5.8 L10.3 0.7" fill="none" stroke="#424242" stroke-width="1.1"/></svg>
<svg style="left:370px;top:516px" width="11" height="7" viewBox="0 0 11 7"><path d="M0.7 0.7 L5.5 5.8 L10.3 0.7" fill="none" stroke="#424242" stroke-width="1.1"/></svg>
<svg style="left:387px;top:510px" width="19" height="15" viewBox="0 0 19 15"><path d="M0.8 14.2 L6 1 L11.2 14.2 M2.6 9.8 H9.4" fill="none" stroke="#424242" stroke-width="1.2"/><path d="M12.3 3.2 L14.7 1 L17.1 3.2" fill="none" stroke="#2b88d8" stroke-width="1.1"/></svg>
<svg style="left:416px;top:510px" width="15" height="15" viewBox="0 0 15 15"><path d="M0.6 14.2 L4.7 4 L8.8 14.2 M2 10.8 H7.4" fill="none" stroke="#424242" stroke-width="1.1"/><path d="M10 1.2 L12.2 3.2 L14.4 1.2" fill="none" stroke="#2b88d8" stroke-width="1.1"/></svg>
<svg style="left:443.5px;top:510px" width="9" height="17" viewBox="0 0 8 15"><path d="M6.6 4 C6.1 2.9 5.1 2.3 3.8 2.3 C2.2 2.3 1.1 3.2 1.1 4.6 C1.1 7.8 6.8 6.8 6.8 10.1 C6.8 11.5 5.6 12.4 3.9 12.4 C2.4 12.4 1.3 11.8 0.7 10.7 M3.9 0.3 V14.5" fill="none" stroke="#424242" stroke-width="1"/></svg>
<svg style="left:462px;top:516px" width="10" height="6" viewBox="0 0 10 6"><path d="M0.7 0.7 L5 5 L9.3 0.7" fill="none" stroke="#424242" stroke-width="1.1"/></svg>
<svg style="left:482.5px;top:511px" width="17" height="15" viewBox="0 0 17 15"><ellipse cx="3.8" cy="3.8" rx="2.8" ry="3" fill="none" stroke="#424242" stroke-width="1.1"/><ellipse cx="12.6" cy="10.8" rx="2.8" ry="3" fill="none" stroke="#424242" stroke-width="1.1"/><path d="M14 0.3 L2.8 14.6" stroke="#424242" stroke-width="1.1"/></svg>
<svg style="left:512px;top:510px" width="10" height="17" viewBox="0 0 10 17"><circle cx="5" cy="4.6" r="3.8" fill="#424242"/><path d="M8.6 5 C8.8 10 6 14 1.5 16" fill="none" stroke="#424242" stroke-width="2.3"/></svg>
<svg style="left:534.5px;top:509.5px" width="17" height="17" viewBox="0 0 17 17"><path d="M0.6 0.6 H16.4 V16.4 H0.6 Z" fill="none" stroke="#616161" stroke-width="1.2"/><path d="M1 2.8 H16 M1 14.2 H16" stroke="#616161" stroke-width="0.8"/><path d="M2.2 3.2 V13.8 M14.8 3.2 V13.8" stroke="#2b88d8" stroke-width="1.2"/><path d="M4.8 8.5 H12.2 M6.8 6.5 L4.6 8.5 L6.8 10.5 M10.2 6.5 L12.4 8.5 L10.2 10.5" fill="none" stroke="#2b88d8" stroke-width="1.2"/><path d="M8.5 0.6 V2.8 M8.5 14.2 V16.4" stroke="#616161" stroke-width="0.8"/></svg>
<div class="t" style="left:222px;top:539px;font-size:16.5px;font-weight:bold;color:#323130">B</div>
<div class="t" style="left:249.5px;top:538.5px;font-size:17.5px;font-style:italic;font-family:'Liberation Serif',serif;color:#424242">I</div>
<svg style="left:273px;top:539.5px" width="17" height="17" viewBox="0 0 17 17"><path d="M0.8 0.8 H16.2 V16.2 H0.8 Z M8.5 0.8 V16.2 M0.8 8.5 H16.2" fill="none" stroke="#424242" stroke-width="1.3"/></svg>
<svg style="left:296px;top:546px" width="10" height="6" viewBox="0 0 10 6"><path d="M0.7 0.7 L5 5 L9.3 0.7" fill="none" stroke="#424242" stroke-width="1.1"/></svg>
<div class="a" style="left:314px;top:553px;width:19px;height:4.5px;background:#dfecd8"></div>
<svg style="left:315px;top:538.5px" width="17" height="15" viewBox="0 0 17 15"><path d="M1.3 9.7 L6.4 4.6 L12 9.7 L6.8 14.4 Z" fill="#fafafa" stroke="#5a5a5a" stroke-width="1.1" stroke-linejoin="round"/><path d="M6.6 5.5 V2 Q7.3 0.6 8.1 2 V7.4" fill="none" stroke="#6b6b6b" stroke-width="1.4"/><path d="M10.6 4.6 C13 3.6 15.3 6.5 15 9.2 C14.8 11 13.9 12.6 13.4 12.8 C12.9 11.2 12.5 9.2 11.8 7.8 C11.3 6.6 10.8 5.4 10.6 4.6 Z" fill="#1f6fc0"/></svg>
<svg style="left:337px;top:546px" width="10" height="6" viewBox="0 0 10 6"><path d="M0.7 0.7 L5 5 L9.3 0.7" fill="none" stroke="#424242" stroke-width="1.1"/></svg>
<svg style="left:359px;top:540.5px" width="12" height="14" viewBox="0 0 12 14"><path d="M0.7 13.5 L6 0.8 L11.3 13.5 M2.6 9.2 H9.4" fill="none" stroke="#424242" stroke-width="1.1"/></svg>
<svg style="left:378px;top:546px" width="10" height="6" viewBox="0 0 10 6"><path d="M0.7 0.7 L5 5 L9.3 0.7" fill="none" stroke="#424242" stroke-width="1.1"/></svg>
<svg style="left:395px;top:539.5px" width="18" height="17" viewBox="0 0 18 17"><path d="M0 0.7 H17.5 M1.5 4.5 H16 M0 8.2 H17.5 M1.5 12 H16 M0 15.8 H17.5" stroke="#424242" stroke-width="1.1"/></svg>
<svg style="left:422px;top:541px" width="18" height="16" viewBox="0 0 18 16"><text x="0.6" y="7.3" font-size="9.8" fill="#616161" font-family="Liberation Sans" letter-spacing="-0.3">ab</text><text x="0.6" y="15" font-size="9.8" fill="#616161" font-family="Liberation Sans">c</text><path d="M16.3 8.3 C16.3 11 15 12.4 12.5 12.4 H8.2 M10.5 10.2 L8.2 12.4 L10.5 14.6" fill="none" stroke="#2b88d8" stroke-width="1.2"/></svg>
<svg style="left:448.5px;top:540px" width="18" height="18" viewBox="0 0 18 18"><path d="M1 4.5 H9.5 M4 1.5 L1 4.5 L4 7.5" fill="none" stroke="#2b88d8" stroke-width="1.2"/><text x="10.5" y="6.5" font-size="9.5" fill="#616161" font-family="Liberation Sans" transform="scale(1,1.1)">0</text><text x="1.8" y="14.8" font-size="9.5" fill="#616161" font-family="Liberation Sans" letter-spacing="-0.4" transform="scale(1,1.1)">.00</text></svg>
<svg style="left:473px;top:540px" width="19" height="18" viewBox="0 0 19 18"><text x="4" y="6.5" font-size="9.5" fill="#616161" font-family="Liberation Sans" letter-spacing="-0.4" transform="scale(1,1.1)">.00</text><path d="M0.5 12.5 H9.5 M6.5 9.5 L9.5 12.5 L6.5 15.5" fill="none" stroke="#2b88d8" stroke-width="1.2"/><text x="9.3" y="14.8" font-size="9.5" fill="#616161" font-family="Liberation Sans" transform="scale(1,1.1)">.0</text></svg>
<svg style="left:500.5px;top:541px" width="18" height="15" viewBox="0 0 18 15"><path d="M0.8 7 L8 14.3 L10.5 9.5 L6 5 Z" fill="#fbd38f" stroke="#e8821d" stroke-width="1.2"/><path d="M6 5 L10.5 9.5 L12.8 7.2 L8.3 2.7 Z" fill="#fff" stroke="#424242" stroke-width="1"/><path d="M11 4.5 L15.5 0.8 L17 2.3 L13.3 6.8" fill="#fff" stroke="#424242" stroke-width="1"/></svg>

</body></html>
